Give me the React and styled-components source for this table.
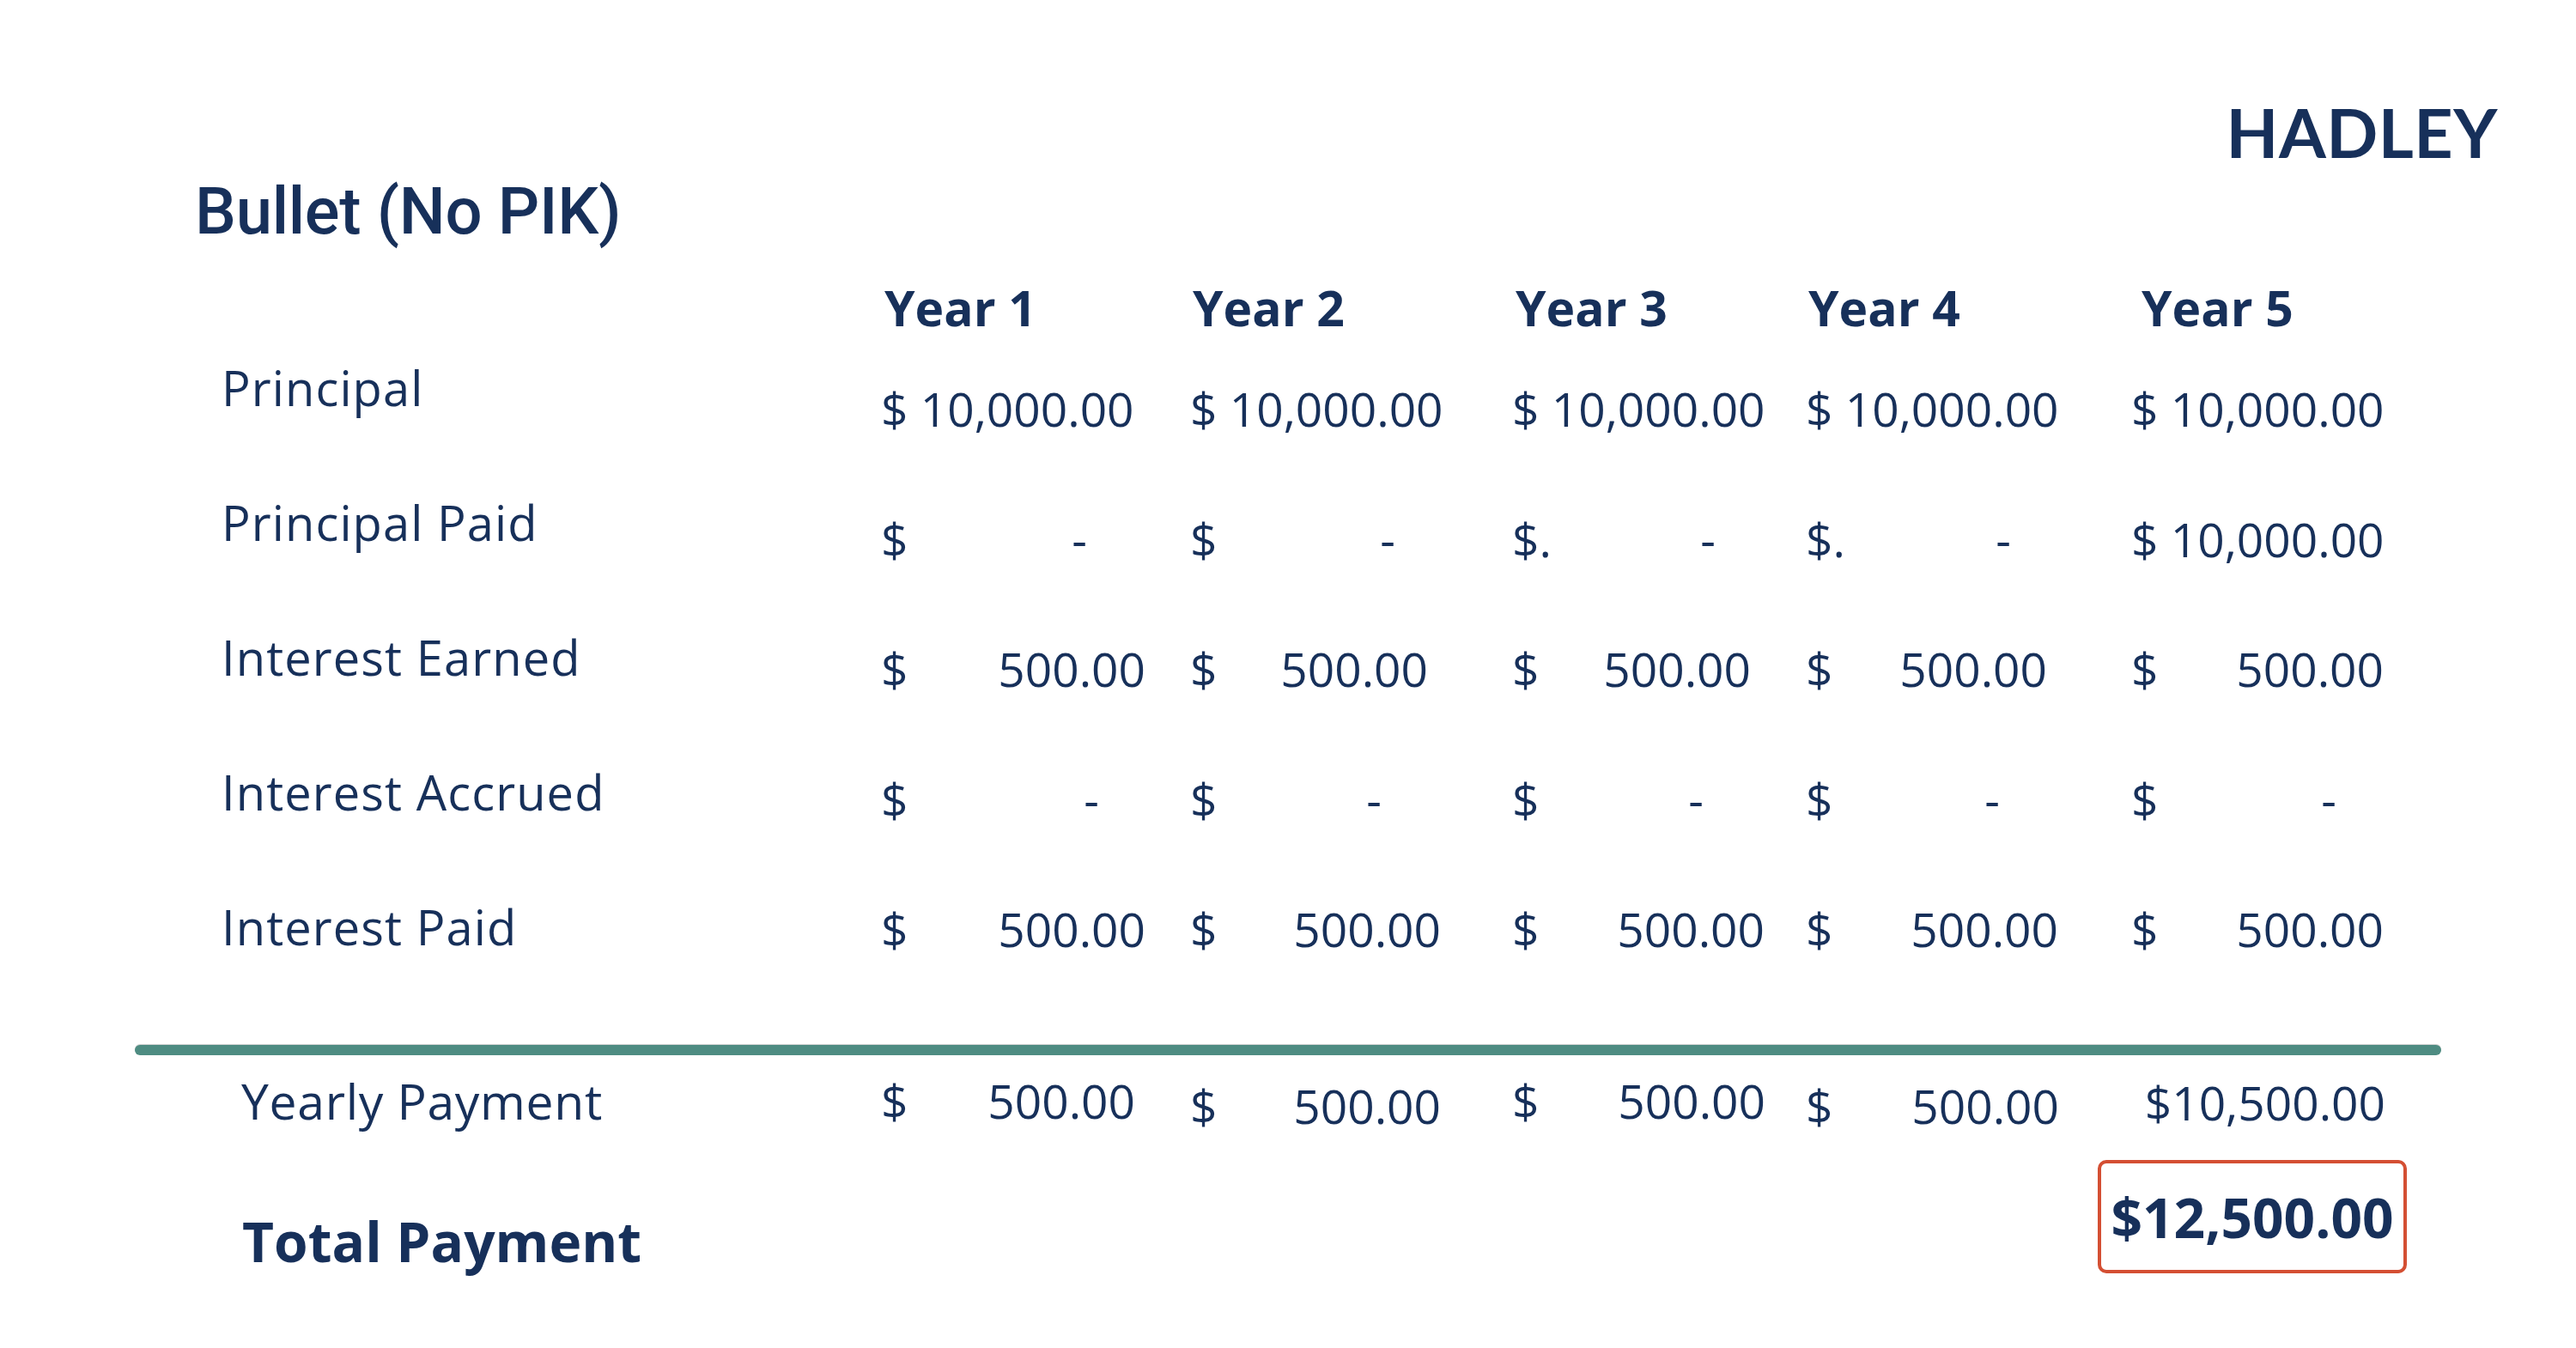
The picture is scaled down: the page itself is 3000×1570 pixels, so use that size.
import React from "react";
import styled, { createGlobalStyle } from "styled-components";

const NAVY = "#17305a";

const Global = createGlobalStyle`
  html, body { margin: 0; padding: 0; background: #ffffff; }
  * { box-sizing: border-box; }
`;

const Page = styled.div`
  width: 3000px;
  height: 1570px;
  background: #ffffff;
  color: ${NAVY};
  font-family: "Open Sans", "Liberation Sans", sans-serif;
  overflow: hidden;
`;

const Header = styled.header`
  display: flex;
  justify-content: space-between;
  align-items: flex-start;
  padding: 114px 91px 0 227px;
`;

const Title = styled.h1`
  margin: 94px 0 0;
  font-family: Roboto, "Open Sans", sans-serif;
  font-weight: 500;
  font-size: 76px;
  line-height: 76px;
  letter-spacing: -0.3px;
`;

const Logo = styled.div`
  font-family: Lato, "Open Sans", sans-serif;
  font-weight: 700;
  font-size: 79px;
  line-height: 80px;
  letter-spacing: 0.5px;
`;

const Body = styled.section`
  display: flex;
  margin-top: 46px;
  padding: 0 157px 0 258px;
`;

const LabelColumn = styled.div`
  width: 768px;
  padding-top: 93px;
  display: flex;
  flex-direction: column;
`;

const RowLabel = styled.div`
  height: 157px;
  font-size: 56px;
  line-height: 56px;
  letter-spacing: 1.1px;
  white-space: nowrap;
`;

const COLS = "360px 375px 342px 379px 361px";

const ValuesGrid = styled.div`
  display: grid;
  grid-template-columns: ${COLS};
  grid-template-rows: 118px repeat(5, 151.5px);
  align-items: start;
`;

const YearHead = styled.div`
  font-weight: 700;
  font-size: 57px;
  line-height: 57px;
  margin-left: ${(p) => p.$shift || 0}px;
  white-space: nowrap;
`;

const ValueCell = styled.div`
  display: flex;
  justify-content: space-between;
  font-size: 55px;
  line-height: 55px;
  white-space: nowrap;
  width: ${(p) => (p.$w ? `${p.$w}px` : "auto")};
  padding-top: ${(p) => p.$drop || 0}px;
`;

const Divider = styled.div`
  margin: 9px 157px 0;
  height: 12px;
  border-radius: 6px;
  background: #4e8c82;
  box-shadow: 0 -1px 0 #d4d4d4;
`;

const SummaryRow = styled.div`
  display: grid;
  grid-template-columns: 745px ${COLS};
  align-items: start;
  margin-top: 25px;
  padding-left: 281px;
`;

const SummaryLabel = styled.div`
  font-size: 57px;
  line-height: 57px;
  letter-spacing: 0.7px;
  white-space: nowrap;
`;

const TotalRow = styled.div`
  display: flex;
  justify-content: space-between;
  align-items: flex-start;
  margin-top: 36px;
  padding: 0 197px 0 282px;
`;

const TotalLabel = styled.div`
  margin-top: 63px;
  font-weight: 700;
  font-size: 64px;
  line-height: 64px;
  white-space: nowrap;
`;

const TotalBox = styled.div`
  width: 360px;
  height: 132px;
  border: 4px solid #d44f33;
  border-radius: 10px;
  display: flex;
  justify-content: center;
  align-items: flex-start;
  padding-top: 31px;
  font-weight: 700;
  font-size: 64px;
  line-height: 64px;
  white-space: nowrap;
`;

const labels = [
  "Principal",
  "Principal Paid",
  "Interest Earned",
  "Interest Accrued",
  "Interest Paid",
];

const years = [
  { name: "Year 1", shift: 4 },
  { name: "Year 2", shift: 3 },
  { name: "Year 3", shift: 4 },
  { name: "Year 4", shift: 3 },
  { name: "Year 5", shift: 12 },
];

const FULL = { text: "$ 10,000.00" };

const rows = [
  [FULL, FULL, FULL, FULL, FULL],
  [
    { cur: "$", amt: "-", w: 240 },
    { cur: "$", amt: "-", w: 239 },
    { cur: "$.", amt: "-", w: 237 },
    { cur: "$.", amt: "-", w: 239 },
    FULL,
  ],
  [
    { cur: "$", amt: "500.00", w: 308 },
    { cur: "$", amt: "500.00", w: 277 },
    { cur: "$", amt: "500.00", w: 278 },
    { cur: "$", amt: "500.00", w: 281 },
    { cur: "$", amt: "500.00", w: 294 },
  ],
  [
    { cur: "$", amt: "-", w: 254 },
    { cur: "$", amt: "-", w: 223 },
    { cur: "$", amt: "-", w: 223 },
    { cur: "$", amt: "-", w: 226 },
    { cur: "$", amt: "-", w: 239 },
  ],
  [
    { cur: "$", amt: "500.00", w: 308 },
    { cur: "$", amt: "500.00", w: 292 },
    { cur: "$", amt: "500.00", w: 294 },
    { cur: "$", amt: "500.00", w: 294 },
    { cur: "$", amt: "500.00", w: 294 },
  ],
];

const yearly = [
  { cur: "$", amt: "500.00", w: 296, drop: 0 },
  { cur: "$", amt: "500.00", w: 292, drop: 6 },
  { cur: "$", amt: "500.00", w: 295, drop: 0 },
  { cur: "$", amt: "500.00", w: 295, drop: 6 },
  { cur: "", amt: "$10,500.00", w: 296, drop: 2 },
];

function Value({ v }) {
  if (v.text) return <ValueCell>{v.text}</ValueCell>;
  return (
    <ValueCell $w={v.w} $drop={v.drop}>
      <span>{v.cur}</span>
      <span>{v.amt}</span>
    </ValueCell>
  );
}

export default function App() {
  return (
    <>
      <Global />
      <Page>
        <Header>
          <Title>Bullet (No PIK)</Title>
          <Logo>HADLEY</Logo>
        </Header>

        <Body>
          <LabelColumn>
            {labels.map((l) => (
              <RowLabel key={l}>{l}</RowLabel>
            ))}
          </LabelColumn>
          <ValuesGrid>
            {years.map((y) => (
              <YearHead key={y.name} $shift={y.shift}>
                {y.name}
              </YearHead>
            ))}
            {rows.map((r, i) =>
              r.map((v, j) => <Value key={`${i}-${j}`} v={v} />)
            )}
          </ValuesGrid>
        </Body>

        <Divider />

        <SummaryRow>
          <SummaryLabel>Yearly Payment</SummaryLabel>
          {yearly.map((v, j) => (
            <Value key={j} v={v} />
          ))}
        </SummaryRow>

        <TotalRow>
          <TotalLabel>Total Payment</TotalLabel>
          <TotalBox>$12,500.00</TotalBox>
        </TotalRow>
      </Page>
    </>
  );
}
